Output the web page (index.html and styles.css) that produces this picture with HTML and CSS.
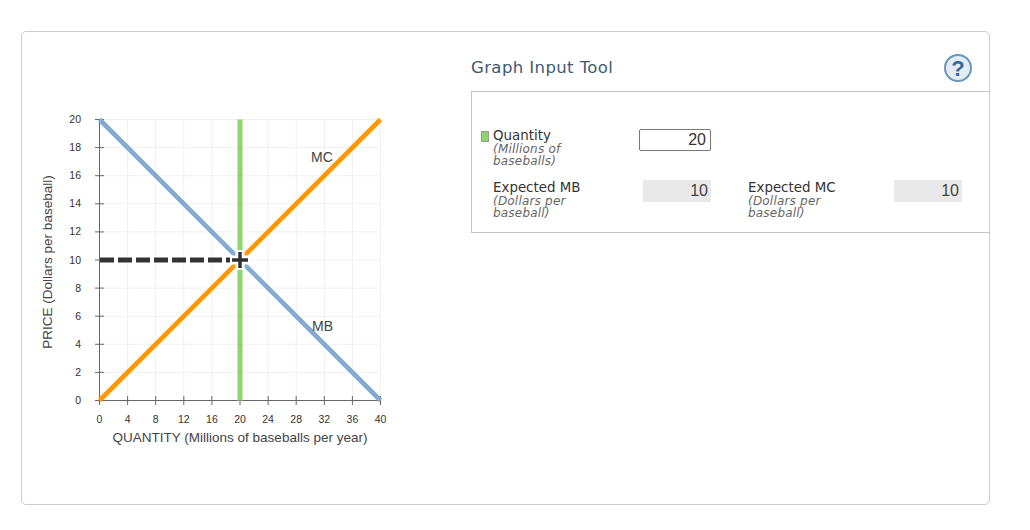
FILE: index.html
```html
<!DOCTYPE html>
<html lang="en">
<head>
  <meta charset="UTF-8"/>
  <title>Graph Input Tool</title>
  <link rel="stylesheet" href="styles.css">
</head>
<body>

  <div class="card">
    <svg class="chart" width="449" height="360" viewBox="22 100 449 360">
      <!-- grid -->
      <path class="grid" d="M127.6 119.5V400.5M155.7 119.5V400.5M183.8 119.5V400.5M211.9 119.5V400.5M240 119.5V400.5M268.1 119.5V400.5M296.2 119.5V400.5M324.3 119.5V400.5M352.4 119.5V400.5M380.5 119.5V400.5"/>
      <path class="grid" d="M99.5 119.5H380.5M99.5 147.6H380.5M99.5 175.7H380.5M99.5 203.8H380.5M99.5 231.9H380.5M99.5 260H380.5M99.5 288.1H380.5M99.5 316.2H380.5M99.5 344.3H380.5M99.5 372.4H380.5"/>

      <!-- axes and ticks -->
      <path class="axis" d="M99.5 119.5V400.5H380.5"/>
      <path class="axis" d="M95 119.5H104M95 147.6H104M95 175.7H104M95 203.8H104M95 231.9H104M95 260H104M95 288.1H104M95 316.2H104M95 344.3H104M95 372.4H104M95 400.5H104"/>
      <path class="axis" d="M99.5 396V405M127.6 396V405M155.7 396V405M183.8 396V405M211.9 396V405M240 396V405M268.1 396V405M296.2 396V405M324.3 396V405M352.4 396V405M380.5 396V405"/>

      <!-- curves -->
      <line class="curve mc" x1="99.5" y1="400.5" x2="380.5" y2="119.5"/>
      <line class="curve mb" x1="99.5" y1="119.5" x2="380.5" y2="400.5"/>
      <line class="curve qty" x1="240" y1="119.5" x2="240" y2="400.5"/>
      <line class="dashed" x1="100" y1="260" x2="240" y2="260"/>

      <!-- crosshair -->
      <path class="cross-halo" d="M240 250V270M230 260H250"/>
      <path class="cross" d="M240 252V268M232 260H248"/>

      <text class="curve-label" x="322" y="162">MC</text>
      <text class="curve-label" x="322.500" y="331">MB</text>

      <g class="tick-y">
        <text x="81" y="123">20</text>
        <text x="81" y="151">18</text>
        <text x="81" y="179">16</text>
        <text x="81" y="207">14</text>
        <text x="81" y="235">12</text>
        <text x="81" y="264">10</text>
        <text x="81" y="292">8</text>
        <text x="81" y="320">6</text>
        <text x="81" y="348">4</text>
        <text x="81" y="376">2</text>
        <text x="81" y="404">0</text>
      </g>
      <g class="tick-x">
        <text x="99.500" y="423">0</text>
        <text x="127.600" y="423">4</text>
        <text x="155.700" y="423">8</text>
        <text x="183.800" y="423">12</text>
        <text x="211.900" y="423">16</text>
        <text x="240" y="423">20</text>
        <text x="268.100" y="423">24</text>
        <text x="296.200" y="423">28</text>
        <text x="324.300" y="423">32</text>
        <text x="352.400" y="423">36</text>
        <text x="380.500" y="423">40</text>
      </g>

      <text class="axis-title" x="240" y="441.500">QUANTITY (Millions of baseballs per year)</text>
      <text class="axis-title" transform="translate(52 262) rotate(-90)">PRICE (Dollars per baseball)</text>
    </svg>

    <div class="tool">
      <div class="tool-head">
        <h2 class="tool-title">Graph Input Tool</h2>
        <svg class="help" width="30" height="30" viewBox="0 0 30 30">
          <circle cx="15" cy="15" r="13" fill="#e3ecf4" stroke="#6a95bc" stroke-width="2"/>
          <text x="15" y="23" text-anchor="middle">?</text>
        </svg>
      </div>

      <div class="panel">
        <div class="row">
          <div class="field field-input">
            <div class="label">
              <span class="swatch"></span>
              <div>
                <div class="name">Quantity</div>
                <div class="unit">(Millions of<br>baseballs)</div>
              </div>
            </div>
            <input class="num-input" type="text" value="20">
          </div>
        </div>
        <div class="row">
          <div class="field field-mb">
            <div class="label label-plain">
              <div>
                <div class="name">Expected MB</div>
                <div class="unit">(Dollars per<br>baseball)</div>
              </div>
            </div>
            <div class="readout">10</div>
          </div>
          <div class="field field-mc">
            <div class="label">
              <div>
                <div class="name">Expected MC</div>
                <div class="unit">(Dollars per<br>baseball)</div>
              </div>
            </div>
            <div class="readout">10</div>
          </div>
        </div>
      </div>
    </div>
  </div>

</body>
</html>
```

FILE: styles.css
```css
body {
  margin: 0;
  background: #fff;
  color: #333;
  font-family: "Liberation Sans", Arial, sans-serif;
}

.card {
  display: flex;
  width: 969px;
  height: 474px;
  margin: 31px 0 0 21px;
  box-sizing: border-box;
  border: 1px solid #ccc;
  border-radius: 5px;
}

/* chart */
.chart {
  display: block;
  flex: none;
  margin-top: 68px;
}

.grid {
  fill: none;
  stroke: #f0f0f0;
  stroke-width: 1;
}

.axis {
  fill: none;
  stroke: #666;
  stroke-width: 1;
}

.curve {
  stroke-width: 4.6;
}

.mc { stroke: #ff9800; }
.mb { stroke: #82aad2; }
.qty { stroke: #8cd66a; stroke-width: 5; }

.dashed {
  stroke: #333;
  stroke-width: 5;
  stroke-dasharray: 14 4;
}

.cross-halo {
  fill: none;
  stroke: #fff;
  stroke-width: 9;
}

.cross {
  fill: none;
  stroke: #333;
  stroke-width: 3.5;
}

.curve-label {
  font-size: 14px;
  fill: #444;
  text-anchor: middle;
}

.tick-y text,
.tick-x text {
  font-size: 10.5px;
  fill: #333;
}

.tick-y text { text-anchor: end; }
.tick-x text { text-anchor: middle; }

.axis-title {
  font-size: 13.5px;
  fill: #444;
  text-anchor: middle;
}

/* input tool */
.tool {
  flex: 1;
  min-width: 0;
}

.tool-head {
  display: flex;
  justify-content: space-between;
  align-items: center;
  height: 59px;
  padding: 12px 16px 0 0;
  box-sizing: border-box;
}

.tool-title {
  margin: 0;
  font-family: "DejaVu Sans", Verdana, sans-serif;
  font-size: 16.5px;
  font-weight: normal;
  letter-spacing: 0.4px;
  color: #3d5a73;
}

.help {
  display: block;
}

.help text {
  font-family: "Liberation Sans", Arial, sans-serif;
  font-size: 22px;
  font-weight: bold;
  fill: #2f6aa0;
}

.panel {
  height: 142px;
  padding: 37px 0 0 9px;
  box-sizing: border-box;
  border: 1px solid #c4c4c4;
  border-right: 0;
}

.row {
  display: flex;
  margin-bottom: 14px;
}

.field {
  display: flex;
  justify-content: space-between;
  align-items: flex-start;
}

.field-input { width: 230px; }
.field-mb { width: 230px; }
.field-mc { width: 214px; margin-left: 37px; }

.field-mb .readout,
.field-mc .readout {
  margin-top: -1px;
}

.label {
  display: flex;
  gap: 4px;
}

.label-plain {
  padding-left: 12px;
}

.swatch {
  width: 6px;
  height: 9px;
  margin-top: 2px;
  background: #8cd66a;
  border: 1px solid #999;
}

.name {
  font-family: "DejaVu Sans", Verdana, sans-serif;
  font-size: 13.4px;
  line-height: 14px;
  color: #333;
}

.unit {
  font-family: "DejaVu Sans", Verdana, sans-serif;
  font-size: 12px;
  font-style: italic;
  letter-spacing: 0.2px;
  line-height: 12px;
  color: #666;
}

.num-input {
  width: 72px;
  height: 22px;
  padding: 0 4px;
  box-sizing: border-box;
  border: 1px solid #777;
  border-radius: 2px;
  font-family: "Liberation Sans", Arial, sans-serif;
  font-size: 16px;
  color: #333;
  text-align: right;
}

.readout {
  width: 68px;
  height: 22px;
  padding-right: 3px;
  box-sizing: border-box;
  background: #e9e9e9;
  font-size: 16px;
  line-height: 22px;
  color: #444;
  text-align: right;
}
```
